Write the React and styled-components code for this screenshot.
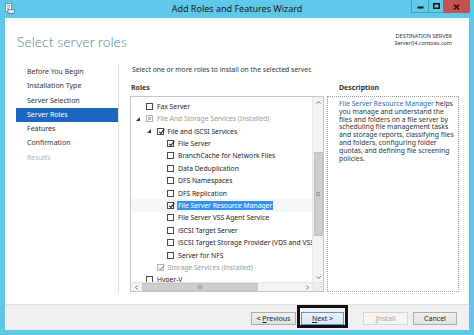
import React from 'react';
import styled, { createGlobalStyle } from 'styled-components';

const FONT = `"Noto Sans", "Open Sans", "Liberation Sans", sans-serif`;

const GlobalStyle = createGlobalStyle`
  html, body { margin: 0; padding: 0; background: #5fc8e8; }
  body { width: 474px; height: 335px; overflow: hidden; }
`;

const Window = styled.div`
  width: 474px;
  height: 335px;
  background: #5fc8e8;
  display: flex;
  flex-direction: column;
  font-family: ${FONT};
  color: #1e1e1e;
`;

const TitleBar = styled.div`
  height: 18px;
  flex-shrink: 0;
  display: grid;
  grid-template-columns: 1fr auto 1fr;
  align-items: start;
`;

const AppIcon = styled.svg`
  justify-self: start;
  margin: 3px 0 0 5px;
`;

const Title = styled.div`
  font-size: 9px;
  line-height: 18px;
  color: #1a1a1a;
  white-space: nowrap;
`;

const Controls = styled.div`
  justify-self: end;
  display: flex;
  margin-right: 4px;
  height: 13px;
`;

const CtrlButton = styled.div`
  width: ${(p) => p.$w}px;
  height: 13px;
  box-sizing: border-box;
  display: flex;
  align-items: center;
  justify-content: center;
  background: ${(p) => (p.$close ? '#c75050' : '#62c9e9')};
  border-left: ${(p) => (p.$close ? 'none' : '1px solid #3f9fc4')};
  border-bottom: ${(p) => (p.$close ? 'none' : '1px solid #3f9fc4')};
`;

const Body = styled.div`
  flex: 1;
  min-height: 0;
  margin: 0 5px 5px 5px;
  background: #fff;
  display: flex;
  flex-direction: column;
`;

const Header = styled.div`
  height: 46px;
  flex-shrink: 0;
  display: flex;
  justify-content: space-between;
  align-items: flex-start;
  padding: 0 17px 0 12px;
`;

const Heading = styled.h1`
  margin: 0;
  padding-top: 16px;
  font-family: "Lato", ${FONT};
  font-size: 14px;
  line-height: 16px;
  font-weight: 300;
  color: #527f98;
  white-space: nowrap;
`;

const Dest = styled.div`
  padding-top: 15px;
  text-align: right;
  font-size: 5.5px;
  line-height: 7px;
  color: #333;
  white-space: nowrap;
`;

const Main = styled.div`
  flex: 1;
  min-height: 0;
  display: flex;
`;

const Nav = styled.nav`
  width: 114px;
  flex-shrink: 0;
  box-sizing: border-box;
  border-right: 1px solid #dcdcdc;
  margin-bottom: 11px;
  padding-top: 1px;
`;

const NavItem = styled.div`
  margin-left: 11px;
  height: 14.3px;
  line-height: 14.3px;
  padding-left: 11px;
  font-size: 7px;
  white-space: nowrap;
  color: ${(p) => (p.$active ? '#fff' : p.$disabled ? '#b4b4b4' : '#333')};
  background: ${(p) => (p.$active ? '#1d67c1' : 'transparent')};
`;

const Content = styled.div`
  flex: 1;
  min-width: 0;
  display: flex;
  flex-direction: column;
  padding: 2px 11px 12px 11px;
`;

const Intro = styled.div`
  font-size: 6.8px;
  line-height: 8px;
  padding-left: 2px;
  color: #333;
  white-space: nowrap;
`;

const Columns = styled.div`
  flex: 1;
  min-height: 0;
  margin-top: 10px;
  display: flex;
  gap: 3px;
`;

const Column = styled.div`
  display: flex;
  flex-direction: column;
  width: ${(p) => (p.$w ? `${p.$w}px` : 'auto')};
  flex: ${(p) => (p.$w ? '0 0 auto' : '1')};
`;

const ColHeader = styled.div`
  font-size: 7px;
  font-weight: 700;
  line-height: 8px;
  margin-bottom: 4px;
  padding-left: ${(p) => p.$indent}px;
  color: #333;
`;

const RolesBox = styled.div`
  flex: 1;
  min-height: 0;
  box-sizing: border-box;
  border: 1px solid #c6c6c6;
  display: grid;
  grid-template-columns: 1fr 11px;
  grid-template-rows: 1fr 9px;
`;

const List = styled.div`
  overflow: hidden;
  padding-top: 3.2px;
  min-width: 0;
`;

const Row = styled.div`
  height: 12.4px;
  display: flex;
  align-items: center;
  padding-left: ${(p) => 6 + p.$level * 10.5}px;
  white-space: nowrap;
  background: ${(p) => (p.$focus ? '#f6f6f6' : 'transparent')};
`;

const ExpSlot = styled.div`
  width: 9px;
  flex-shrink: 0;
  display: flex;
  align-items: center;
`;

const Box = styled.div`
  width: 7px;
  height: 7px;
  flex-shrink: 0;
  box-sizing: border-box;
  border: 1px solid ${(p) => (p.$disabled ? '#b0b0b0' : '#4a4a4a')};
  background: #fff;
  margin-right: 4px;
  display: flex;
  align-items: center;
  justify-content: center;
  position: relative;
`;

const Mixed = styled.div`
  width: 3px;
  height: 3px;
  background: #b8b8b8;
`;

const CheckMark = styled.svg`
  position: absolute;
  left: 0;
  top: -1px;
  overflow: visible;
`;

const Label = styled.span`
  font-size: 6.75px;
  line-height: 9px;
  padding: 0 ${(p) => (p.$selected ? '1px' : '0')};
  margin-left: ${(p) => (p.$selected ? '-1px' : '0')};
  color: ${(p) => (p.$selected ? '#fff' : p.$disabled ? '#9a9a9a' : '#1e1e1e')};
  background: ${(p) => (p.$selected ? '#3391f0' : 'transparent')};
`;

const VScroll = styled.div`
  background: #f3f3f3;
  border-left: 1px solid #e6e6e6;
  display: flex;
  flex-direction: column;
  align-items: center;
`;

const HScroll = styled.div`
  background: #f3f3f3;
  border-top: 1px solid #e6e6e6;
  display: flex;
  align-items: center;
`;

const Corner = styled.div`
  background: #ececec;
  border-left: 1px solid #e6e6e6;
  border-top: 1px solid #e6e6e6;
`;

const ArrowBtn = styled.div`
  width: ${(p) => (p.$horiz ? '10px' : '100%')};
  height: ${(p) => (p.$horiz ? '100%' : '10px')};
  flex-shrink: 0;
  display: flex;
  align-items: center;
  justify-content: center;
  margin-top: ${(p) => (p.$end && !p.$horiz ? 'auto' : '0')};
  margin-left: ${(p) => (p.$end && p.$horiz ? 'auto' : '0')};
`;

const VThumb = styled.div`
  width: 9px;
  height: 84px;
  box-sizing: border-box;
  margin-top: 45px;
  background: #cdcdcd;
  border: 1px solid #c2c2c2;
  display: flex;
  align-items: center;
  justify-content: center;
`;

const HThumb = styled.div`
  width: 116px;
  height: 8px;
  box-sizing: border-box;
  margin-left: 1px;
  background: #cdcdcd;
  border: 1px solid #c2c2c2;
  display: flex;
  align-items: center;
  justify-content: center;
`;

const DescBox = styled.div`
  flex: 1;
  box-sizing: border-box;
  border: 1px dotted #9c9c9c;
  padding: 3px 4px 0 11px;
  font-size: 6.8px;
  line-height: 7.8px;
  color: #333;
  white-space: nowrap;
`;

const Link = styled.span`
  color: #2a6ebb;
`;

const Footer = styled.div`
  height: 26px;
  flex-shrink: 0;
  box-sizing: border-box;
  background: #f0f0f0;
  border-top: 1px solid #dfdfdf;
  display: flex;
  justify-content: flex-end;
  align-items: flex-start;
  padding-right: 12px;
`;

const Button = styled.div`
  width: ${(p) => p.$w}px;
  height: 13px;
  box-sizing: border-box;
  margin-top: ${(p) => (p.$framed ? '0' : '7px')};
  margin-left: ${(p) => p.$ml || 0}px;
  display: flex;
  align-items: center;
  justify-content: center;
  font-size: 7px;
  white-space: nowrap;
  color: ${(p) => (p.$disabled ? '#a3a3a3' : '#1e1e1e')};
  border: 1px solid ${(p) => (p.$default ? '#5b9bd1' : p.$disabled ? '#d3d3d3' : '#acacac')};
  background: ${(p) =>
    p.$default
      ? 'linear-gradient(#e9f1f8, #dbe7f3)'
      : p.$disabled
      ? '#f4f4f4'
      : 'linear-gradient(#f0f0f0, #e3e3e3)'};
`;

const Frame = styled.div`
  margin-left: 1px;
  border: 3px solid #111;
  padding: 4px 1px 0 1px;
`;

const U = styled.span`
  text-decoration: underline;
`;

const Chevron = ({ dir }) => {
  const pts = {
    up: '0.5,3.5 2.5,1.5 4.5,3.5',
    down: '0.5,1.5 2.5,3.5 4.5,1.5',
    left: '3.5,0.5 1.5,2.5 3.5,4.5',
    right: '1.5,0.5 3.5,2.5 1.5,4.5',
  }[dir];
  return (
    <svg width="5" height="5" viewBox="0 0 5 5">
      <polyline points={pts} fill="none" stroke="#666" strokeWidth="0.9" />
    </svg>
  );
};

const Grip = ({ vertical }) =>
  vertical ? (
    <svg width="4" height="4" viewBox="0 0 4 4">
      <path d="M0 0.5H4M0 2H4M0 3.5H4" stroke="#8a8a8a" strokeWidth="0.7" />
    </svg>
  ) : (
    <svg width="4" height="4" viewBox="0 0 4 4">
      <path d="M0.5 0V4M2 0V4M3.5 0V4" stroke="#8a8a8a" strokeWidth="0.7" />
    </svg>
  );

const Checkbox = ({ state }) => {
  const disabled = state === 'mixedDisabled' || state === 'onDisabled';
  return (
    <Box $disabled={disabled}>
      {state === 'mixedDisabled' && <Mixed />}
      {(state === 'on' || state === 'onDisabled') && (
        <CheckMark width="7" height="7" viewBox="0 0 7 7">
          <path
            d="M1.3 3.8 L2.9 5.5 L6.3 1.2"
            fill="none"
            stroke={state === 'onDisabled' ? '#9a9a9a' : '#1a1a1a'}
            strokeWidth="1.1"
          />
        </CheckMark>
      )}
    </Box>
  );
};

const rows = [
  { level: 0, cb: 'off', label: 'Fax Server' },
  { level: 0, exp: true, cb: 'mixedDisabled', label: 'File And Storage Services (Installed)', disabled: true },
  { level: 1, exp: true, cb: 'on', label: 'File and iSCSI Services' },
  { level: 2, cb: 'on', label: 'File Server' },
  { level: 2, cb: 'off', label: 'BranchCache for Network Files' },
  { level: 2, cb: 'off', label: 'Data Deduplication' },
  { level: 2, cb: 'off', label: 'DFS Namespaces' },
  { level: 2, cb: 'off', label: 'DFS Replication' },
  { level: 2, cb: 'on', label: 'File Server Resource Manager', selected: true },
  { level: 2, cb: 'off', label: 'File Server VSS Agent Service' },
  { level: 2, cb: 'off', label: 'iSCSI Target Server' },
  { level: 2, cb: 'off', label: 'iSCSI Target Storage Provider (VDS and VSS hardware providers)' },
  { level: 2, cb: 'off', label: 'Server for NFS' },
  { level: 1, cb: 'onDisabled', label: 'Storage Services (Installed)', disabled: true },
  { level: 0, cb: 'off', label: 'Hyper-V' },
];

const navItems = [
  { label: 'Before You Begin' },
  { label: 'Installation Type' },
  { label: 'Server Selection' },
  { label: 'Server Roles', active: true },
  { label: 'Features' },
  { label: 'Confirmation' },
  { label: 'Results', disabled: true },
];

const descLines = [
  'you manage and understand the',
  'files and folders on a file server by',
  'scheduling file management tasks',
  'and storage reports, classifying files',
  'and folders, configuring folder',
  'quotas, and defining file screening',
  'policies.',
];

export default function App() {
  return (
    <>
      <GlobalStyle />
      <Window>
        <TitleBar>
          <AppIcon width="10" height="11" viewBox="0 0 10 11">
            <rect x="0.5" y="0.5" width="6" height="8" fill="#f4f8fb" stroke="#6b8aa0" strokeWidth="0.8" />
            <path d="M1.8 2.5H5M1.8 4H5M1.8 5.5H4" stroke="#7a96aa" strokeWidth="0.7" />
            <rect x="3" y="6.5" width="6.5" height="4" fill="#dfe9f0" stroke="#5b7a90" strokeWidth="0.8" />
          </AppIcon>
          <Title>Add Roles and Features Wizard</Title>
          <Controls>
            <CtrlButton $w={17}>
              <svg width="7" height="6" viewBox="0 0 7 6">
                <rect x="0.5" y="3.5" width="6" height="2" fill="#111" />
              </svg>
            </CtrlButton>
            <CtrlButton $w={15}>
              <svg width="7" height="6" viewBox="0 0 7 6">
                <rect x="0.75" y="0.75" width="5.5" height="4.5" fill="none" stroke="#111" strokeWidth="1.5" />
              </svg>
            </CtrlButton>
            <CtrlButton $w={27} $close>
              <svg width="7" height="6" viewBox="0 0 7 6">
                <path d="M1 0.5L6 5.5M6 0.5L1 5.5" stroke="#2a1010" strokeWidth="1.5" />
              </svg>
            </CtrlButton>
          </Controls>
        </TitleBar>
        <Body>
          <Header>
            <Heading>Select server roles</Heading>
            <Dest>
              DESTINATION SERVER
              <br />
              Server04.contoso.com
            </Dest>
          </Header>
          <Main>
            <Nav>
              {navItems.map((n) => (
                <NavItem key={n.label} $active={n.active} $disabled={n.disabled}>
                  {n.label}
                </NavItem>
              ))}
            </Nav>
            <Content>
              <Intro>Select one or more roles to install on the selected server.</Intro>
              <Columns>
                <Column $w={194}>
                  <ColHeader $indent={1}>Roles</ColHeader>
                  <RolesBox>
                    <List>
                      {rows.map((r) => (
                        <Row key={r.label} $level={r.level} $focus={r.selected}>
                          <ExpSlot>
                            {r.exp && (
                              <svg width="4" height="4" viewBox="0 0 4 4" style={{ marginLeft: -1 }}>
                                <polygon points="4,0 4,4 0,4" fill="#333" />
                              </svg>
                            )}
                          </ExpSlot>
                          <Checkbox state={r.cb} />
                          <Label $disabled={r.disabled} $selected={r.selected}>
                            {r.label}
                          </Label>
                        </Row>
                      ))}
                    </List>
                    <VScroll>
                      <ArrowBtn>
                        <Chevron dir="up" />
                      </ArrowBtn>
                      <VThumb>
                        <Grip vertical />
                      </VThumb>
                      <ArrowBtn $end>
                        <Chevron dir="down" />
                      </ArrowBtn>
                    </VScroll>
                    <HScroll>
                      <ArrowBtn $horiz>
                        <Chevron dir="left" />
                      </ArrowBtn>
                      <HThumb>
                        <Grip />
                      </HThumb>
                      <ArrowBtn $horiz $end>
                        <Chevron dir="right" />
                      </ArrowBtn>
                    </HScroll>
                    <Corner />
                  </RolesBox>
                </Column>
                <Column>
                  <ColHeader $indent={12}>Description</ColHeader>
                  <DescBox>
                    <Link>File Server Resource Manager</Link> helps
                    {descLines.map((l) => (
                      <React.Fragment key={l}>
                        <br />
                        {l}
                      </React.Fragment>
                    ))}
                  </DescBox>
                </Column>
              </Columns>
            </Content>
          </Main>
          <Footer>
            <Button $w={45}>
              &lt;&nbsp;<U>P</U>revious
            </Button>
            <Frame>
              <Button $w={43} $default $framed>
                <U>N</U>ext&nbsp;&gt;
              </Button>
            </Frame>
            <Button $w={45} $ml={15} $disabled>
              <U>I</U>nstall
            </Button>
            <Button $w={44} $ml={5}>
              Cancel
            </Button>
          </Footer>
        </Body>
      </Window>
    </>
  );
}
